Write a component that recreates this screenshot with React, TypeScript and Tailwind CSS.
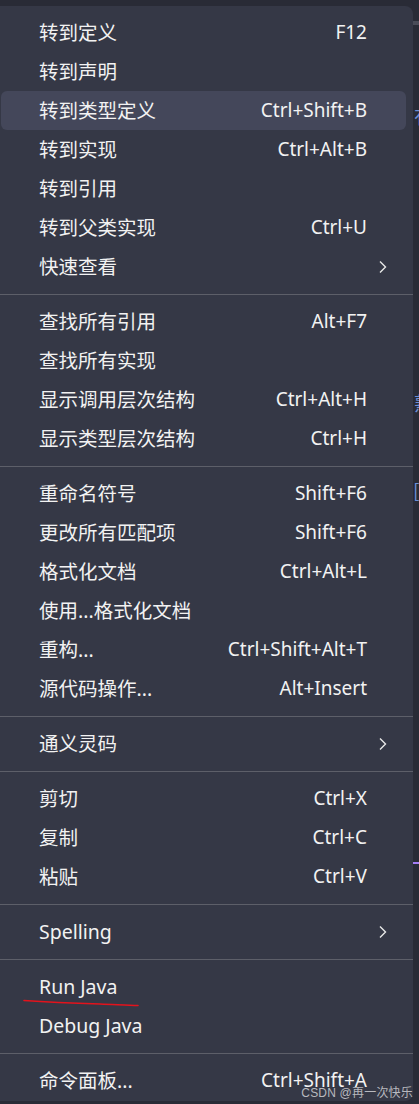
import React from 'react';

type Item = { label: string; shortcut?: string; submenu?: boolean; active?: boolean };

const GROUPS: Item[][] = [
    [
        { label: '转到定义', shortcut: 'F12' },
        { label: '转到声明' },
        { label: '转到类型定义', shortcut: 'Ctrl+Shift+B', active: true },
        { label: '转到实现', shortcut: 'Ctrl+Alt+B' },
        { label: '转到引用' },
        { label: '转到父类实现', shortcut: 'Ctrl+U' },
        { label: '快速查看', submenu: true },
    ],
    [
        { label: '查找所有引用', shortcut: 'Alt+F7' },
        { label: '查找所有实现' },
        { label: '显示调用层次结构', shortcut: 'Ctrl+Alt+H' },
        { label: '显示类型层次结构', shortcut: 'Ctrl+H' },
    ],
    [
        { label: '重命名符号', shortcut: 'Shift+F6' },
        { label: '更改所有匹配项', shortcut: 'Shift+F6' },
        { label: '格式化文档', shortcut: 'Ctrl+Alt+L' },
        { label: '使用...格式化文档' },
        { label: '重构...', shortcut: 'Ctrl+Shift+Alt+T' },
        { label: '源代码操作...', shortcut: 'Alt+Insert' },
    ],
    [{ label: '通义灵码', submenu: true }],
    [
        { label: '剪切', shortcut: 'Ctrl+X' },
        { label: '复制', shortcut: 'Ctrl+C' },
        { label: '粘贴', shortcut: 'Ctrl+V' },
    ],
    [{ label: 'Spelling', submenu: true }],
    [{ label: 'Run Java' }, { label: 'Debug Java' }],
    [{ label: '命令面板...', shortcut: 'Ctrl+Shift+A' }],
];

const Chevron = () => (
    <svg width="10" height="16" viewBox="0 0 10 16" className="absolute right-[18px]" fill="none">
        <path d="M2 2.5 L7.5 8 L2 13.5" stroke="#e8e8e8" strokeWidth="1.4" />
    </svg>
);

const MenuRow = ({ item }: { item: Item }) => (
    <div
        className={`relative h-[39px] flex items-center justify-between pl-[38px] pr-[39px] rounded-[6px] ${
            item.active ? 'bg-[#44475a]' : ''
        }`}
    >
        <span className="text-[19.5px]">{item.label}</span>
        {item.shortcut && <span>{item.shortcut}</span>}
        {item.submenu && <Chevron />}
    </div>
);

const App: React.FC = () => {
    return (
        <div
            className="w-[419px] h-[1104px] bg-[#292b36] flex flex-col overflow-hidden"
            style={{ fontFamily: '"Noto Sans", "Noto Sans CJK SC", sans-serif' }}
        >
            <div className="h-[6px] shrink-0" />
            <div className="flex flex-1">
                <div className="relative w-[413px] h-[1095px] bg-[#353846] rounded-r-[8px] pt-[7px] pl-[1px] pr-[7px] text-[19px] leading-none text-[#f2f2f2]">
                    {GROUPS.map((group, gi) => (
                        <div key={gi}>
                            {gi > 0 && (
                                <div className="h-[16px] flex items-center -ml-[1px] -mr-[7px]">
                                    <div className="h-px w-full bg-[#5d5f69]" />
                                </div>
                            )}
                            {group.map(item => (
                                <MenuRow key={item.label} item={item} />
                            ))}
                        </div>
                    ))}

                    {/* red annotation under Run Java */}
                    <svg className="absolute left-0 top-[988px]" width="150" height="16" viewBox="0 0 150 16" fill="none">
                        <path d="M24 6.5 C50 8.5 80 9.5 100 10 C115 10.5 128 11.5 138 11.5" stroke="#e3131c" strokeWidth="1.6" strokeLinecap="round" />
                    </svg>

                    <span className="absolute right-[0px] bottom-[2px] text-[12px] text-[#b8b9bf] tracking-[0.2px]" style={{ fontFamily: '"Liberation Sans", "Noto Sans CJK SC", sans-serif' }}>
                        CSDN @再一次快乐
                    </span>
                </div>

                {/* editor content peeking behind the menu */}
                <div className="relative flex-1 overflow-hidden text-[19px] leading-none text-[#6d8fd8]" style={{ fontFamily: '"Noto Sans CJK SC", sans-serif' }}>
                    <div className="absolute left-0 top-[15px] w-[6px] h-[4px] bg-[#4a4c58]" />
                    <span className="absolute left-[1px] top-[100px]">有</span>
                    <span className="absolute left-[1px] top-[387px]">熟</span>
                    <span className="absolute left-[0px] top-[474px]">[</span>
                    <div className="absolute left-0 top-[856px] w-[6px] h-[2px] bg-[#a57ef5]" />
                </div>
            </div>
        </div>
    );
};

export default App;
